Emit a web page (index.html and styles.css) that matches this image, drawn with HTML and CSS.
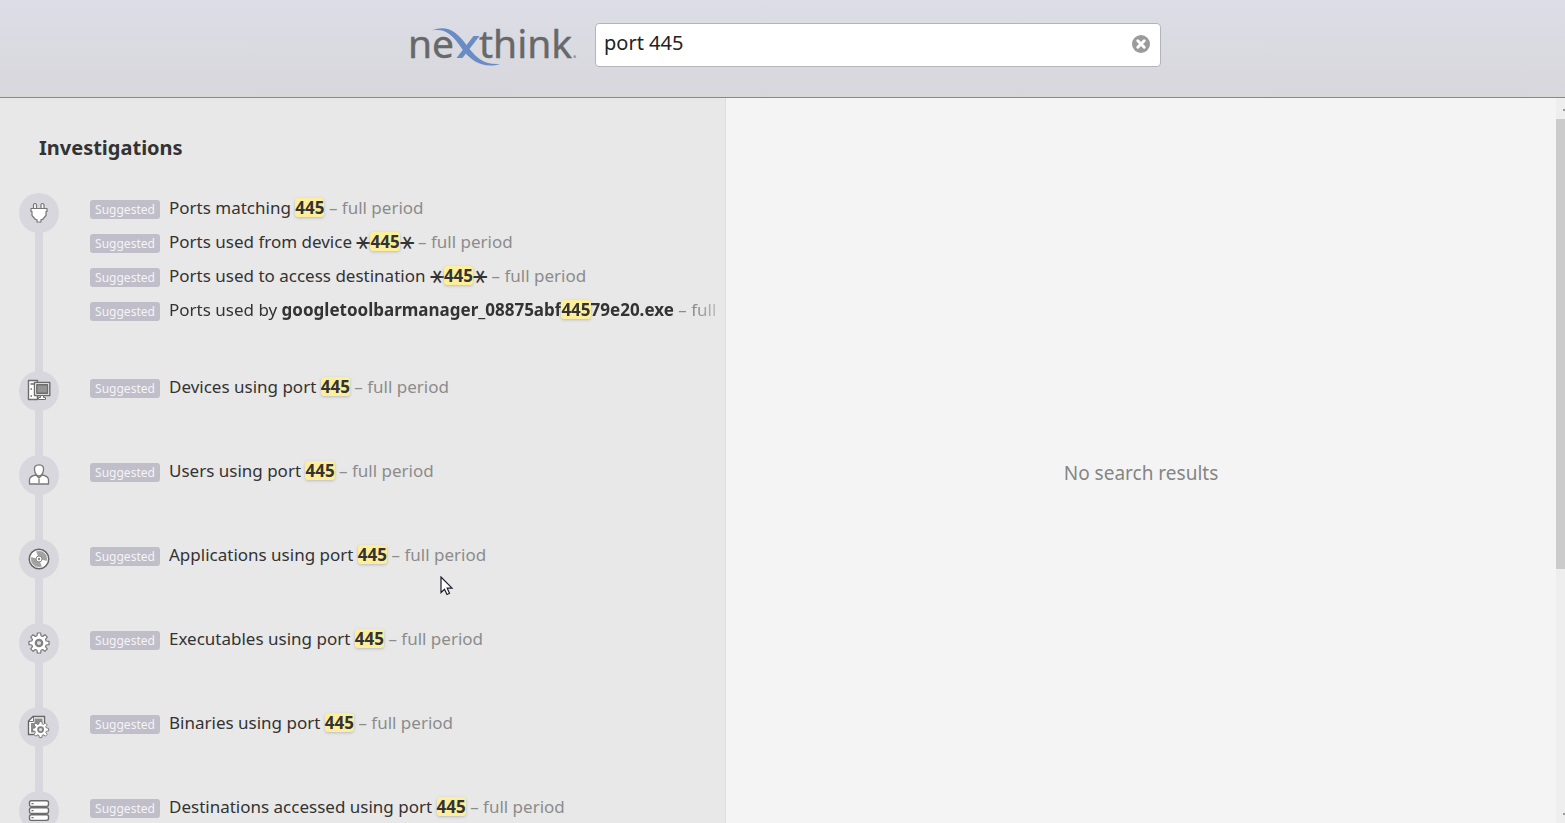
FILE: index.html
```html
<!DOCTYPE html>
<html lang="en">
<head>
<meta charset="utf-8">
<title>Nexthink search</title>
<link rel="stylesheet" href="styles.css">
</head>
<body>
<header class="topbar">
  <svg class="logo" width="176" height="66" viewBox="0 -8 176 66" role="img" aria-label="nexthink">
    <g class="logo-text">
      <text x="4" y="38">n</text>
      <text x="28" y="38">e</text>
      <text x="75" y="38">think</text>
      <text class="logo-dot" x="168" y="38">.</text>
    </g>
    <path d="M28 10.500 C42 4.500 52 11 61 23 C71 37 79 45 96 44 C80 49 66 41 57.500 28 C48 14 41 8.500 28 10.500Z" fill="#6a8cc4"/>
    <path d="M69.500 16H75.500L58.500 38H52.500Z" fill="#6a8cc4"/>
  </svg>
  <form class="search">
    <input class="search-input" type="text" value="port 445" aria-label="Search">
    <button class="clear" type="reset" aria-label="Clear search">
      <svg width="18" height="18" viewBox="0 0 18 18"><circle cx="9" cy="9" r="9" fill="#9b9b9b"/><path d="M5.800 5.800L12.200 12.200M12.200 5.800L5.800 12.200" stroke="#fff" stroke-width="3" stroke-linecap="round"/></svg>
    </button>
  </form>
</header>
<main class="content">
  <section class="investigations">
    <h1 class="title">Investigations</h1>
    <div class="group first">
      <span class="node"><svg width="24" height="24" viewBox="0 0 24 24"><g fill="#fff" stroke="#777" stroke-width="1.200" stroke-linejoin="round"><path d="M6.500 8V3.500Q8 1.500 9.500 3.500V8M14 8V3.500Q15.500 1.500 17 3.500V8"/><path d="M4 7.500H20V10.500H19V14.500L15.500 18.500H14V21H10V18.500H8.500L5 14.500V10.500H4Z"/></g></svg></span>
      <ul class="rows">
        <li class="row"><span class="badge">Suggested</span><span class="label">Ports matching <mark>445</mark> <span class="period">– full period</span></span></li>
        <li class="row"><span class="badge">Suggested</span><span class="label">Ports used from device <span class="star">⚹</span><mark>445</mark><span class="star">⚹</span> <span class="period">– full period</span></span></li>
        <li class="row"><span class="badge">Suggested</span><span class="label">Ports used to access destination <span class="star">⚹</span><mark>445</mark><span class="star">⚹</span> <span class="period">– full period</span></span></li>
        <li class="row"><span class="badge">Suggested</span><span class="label faded">Ports used by <b>googletoolbarmanager_08875abf<mark>445</mark>79e20.exe</b> <span class="period">– full period</span></span></li>
      </ul>
    </div>
    <div class="group">
      <span class="node"><svg width="24" height="24" viewBox="0 0 24 24"><g stroke="#6c6c6c" stroke-width="1.400" stroke-linejoin="round"><path d="M1.500 1.500H10.500V20.500H1.500Z" fill="#fff"/><path d="M3.500 5H7M3.500 10H5M3.500 17H5"/><path d="M7.500 3.500H22.800V16.500H7.500Z" fill="#fff"/><path d="M9.800 5.800H20.600V14.200H9.800Z" fill="#949494"/><path d="M13.500 16.500H16.500V18.500H18.500V20.500H11.500V18.500H13.500Z" fill="#fff" stroke-width="1"/></g></svg></span>
      <ul class="rows"><li class="row"><span class="badge">Suggested</span><span class="label">Devices using port <mark>445</mark> <span class="period">– full period</span></span></li></ul>
    </div>
    <div class="group">
      <span class="node"><svg width="24" height="24" viewBox="0 0 24 24"><g fill="#fff" stroke="#777" stroke-width="1.300" stroke-linejoin="round"><path d="M2.500 21V16.500Q3 13 9 12L12 15L15 12Q21 13 21.500 16.500V21Z"/><path d="M12 1.800C16 1.800 16.800 4.500 16.500 7C16.200 10.500 14 13 12 13C10 13 7.800 10.500 7.500 7C7.200 4.500 8 1.800 12 1.800Z"/><path d="M12 16V20"/></g></svg></span>
      <ul class="rows"><li class="row"><span class="badge">Suggested</span><span class="label">Users using port <mark>445</mark> <span class="period">– full period</span></span></li></ul>
    </div>
    <div class="group">
      <span class="node"><svg width="24" height="24" viewBox="0 0 24 24"><circle cx="12" cy="12" r="9.800" fill="#a2a2a2" stroke="#666" stroke-width="1.400"/><circle cx="12" cy="12" r="8.500" fill="none" stroke="#eee"/><path d="M12 12L3.800 10Q5 5 9 4ZM12 12L20.200 14Q19 19 15 20Z" fill="#fff"/><circle cx="12" cy="12" r="3" fill="#fff" stroke="#888"/><circle cx="12" cy="12" r="1.200" fill="#888"/></svg></span>
      <ul class="rows"><li class="row"><span class="badge">Suggested</span><span class="label">Applications using port <mark>445</mark> <span class="period">– full period</span></span></li></ul>
    </div>
    <div class="group">
      <span class="node"><svg width="24" height="24" viewBox="0 0 24 24"><g id="gear"><path d="M10 4.800L10.300 2H13.700L14 4.800L15.700 5.500L17.900 3.700L20.300 6.100L18.500 8.300L19.200 10L22 10.300V13.700L19.200 14L18.500 15.700L20.300 17.900L17.900 20.300L15.700 18.500L14 19.200L13.700 22H10.300L10 19.200L8.300 18.500L6.100 20.300L3.700 17.900L5.500 15.700L4.800 14L2 13.700V10.300L4.800 10L5.500 8.300L3.700 6.100L6.100 3.700L8.300 5.500Z" fill="#fff" stroke="#777" stroke-width="1.200" stroke-linejoin="round"/><circle cx="12" cy="12" r="3.200" fill="#ddd" stroke="#808080" stroke-width="2.200"/></g></svg></span>
      <ul class="rows"><li class="row"><span class="badge">Suggested</span><span class="label">Executables using port <mark>445</mark> <span class="period">– full period</span></span></li></ul>
    </div>
    <div class="group">
      <span class="node"><svg width="24" height="24" viewBox="0 0 24 24"><path d="M6 1.500H17.500V19.500H1.500V6Z" fill="#fff" stroke="#666" stroke-width="1.400"/><path d="M7.500 3.500H15.500V17.500H4V8H7.500Z" fill="#8c8c8c"/><path d="M2 6.500H6.500V2" fill="none" stroke="#777"/><use href="#gear" transform="translate(4 5) scale(.8)"/></svg></span>
      <ul class="rows"><li class="row"><span class="badge">Suggested</span><span class="label">Binaries using port <mark>445</mark> <span class="period">– full period</span></span></li></ul>
    </div>
    <div class="group">
      <span class="node"><svg width="24" height="24" viewBox="0 0 24 24"><g fill="#fff" stroke="#6c6c6c" stroke-width="1.400"><rect x="2.500" y="1.800" width="19" height="5.600" rx="1.800"/><rect x="2.500" y="8.800" width="19" height="5.600" rx="1.800"/><rect x="2.500" y="15.800" width="19" height="5.600" rx="1.800"/><path d="M4.500 4.600H6.500M4.500 11.600H6.500M4.500 18.600H6.500"/></g></svg></span>
      <ul class="rows"><li class="row"><span class="badge">Suggested</span><span class="label">Destinations accessed using port <mark>445</mark> <span class="period">– full period</span></span></li></ul>
    </div>
  </section>
  <section class="results"><p class="empty">No search results</p></section>
  <div class="scrollbar"><span class="arrow"></span><span class="thumb"></span><span class="arrow end"></span></div>
</main>
<svg class="cursor" width="14" height="20" viewBox="0 0 14 20"><path d="M1 1V16.500L4.500 13.200L7 18.500L9.500 17.300L7.200 12.200H12Z" fill="#fff" stroke="#1c1c2c" stroke-width="1.200"/></svg>
</body>
</html>
```
FILE: styles.css
```css
* { box-sizing: border-box; }
body {
  margin: 0;
  height: 100vh;
  overflow: hidden;
  display: flex;
  flex-direction: column;
  font-family: "Noto Sans", "Open Sans", sans-serif;
  font-size: 17px;
  color: #333;
}
.topbar {
  flex: none;
  display: flex;
  justify-content: center;
  align-items: flex-start;
  gap: 15px;
  height: 98px;
  padding-top: 23px;
  background: linear-gradient(#dcdde6, #d8d7dc);
  border-bottom: 1px solid #88888b;
}
.logo { flex: none; margin-top: -11px; }
.logo-text { font-size: 39px; fill: #686868; stroke: #686868; stroke-width: 0.4; }
.logo-dot { font-size: 20px; fill: #999; stroke: none; }
.search {
  width: 566px;
  height: 44px;
  display: flex;
  align-items: center;
  padding: 0 10px 2px 8px;
  background: #fff;
  border: 1px solid #b4b4b8;
  border-radius: 4px;
}
.search-input {
  flex: 1;
  min-width: 0;
  padding: 0 0 4px;
  border: 0;
  outline: 0;
  background: none;
  font: 20px "Noto Sans", sans-serif;
  color: #222;
}
.clear { display: flex; padding: 0; border: 0; background: none; }
.content {
  flex: 1;
  min-height: 0;
  display: grid;
  grid-template-columns: 726fr 830fr 9px;
}
.investigations {
  overflow: hidden;
  min-width: 0;
  padding: 34px 10px 0 19px;
  background: #e8e8e8;
  border-right: 1px solid #dedede;
}
.title { margin: 0 0 28px 20px; font-size: 20px; line-height: 32px; }
.group {
  display: grid;
  grid-template-columns: 40px minmax(0, 1fr);
  column-gap: 31px;
  min-height: 84px;
  background: linear-gradient(#d8d7dd, #d8d7dd) 16px 0 / 8px 100% no-repeat;
}
.first { min-height: 179px; background-position: 16px 20px; }
.node {
  width: 40px;
  height: 40px;
  display: grid;
  place-items: center;
  border-radius: 50%;
  background: #d8d7dd;
}
.first .node { margin-top: 1px; }
.rows { margin: 0; padding: 0; list-style: none; }
.row { display: flex; align-items: center; gap: 9px; height: 34px; padding-bottom: 2px; }
.badge {
  flex: none;
  width: 70px;
  height: 19px;
  margin-top: 2px;
  overflow: hidden;
  border-radius: 3px;
  background: #c0bec9;
  color: #f4f4f6;
  font-size: 12px;
  line-height: 20px;
  text-align: center;
}
.label { flex: 1; min-width: 0; overflow: hidden; white-space: nowrap; line-height: 32px; }
.faded { mask-image: linear-gradient(to right, #000 calc(100% - 20px), transparent calc(100% + 20px)); }
mark {
  display: inline-block;
  line-height: 19px;
  border-radius: 3px;
  background: #fdee9c;
  box-shadow: 0 1px 3px #bbb;
  color: #333;
  font-weight: 700;
}
.star { font: 24px/0 "DejaVu Sans", sans-serif; vertical-align: -1px; }
.period { color: #8c8c8c; }
.results { display: grid; place-items: center; padding-top: 24px; background: #f4f4f4; }
.empty { margin: 0; font-size: 19px; color: #858585; }
.scrollbar { display: flex; flex-direction: column; background: #eee; overflow: hidden; }
.arrow { flex: none; width: 2px; height: 2px; margin: 11px 0 8px 7px; background: #999; }
.thumb { flex: none; height: 62%; background: #cbcbcb; }
.end { margin-top: auto; }
.cursor { position: absolute; left: 440px; top: 576px; }
```
